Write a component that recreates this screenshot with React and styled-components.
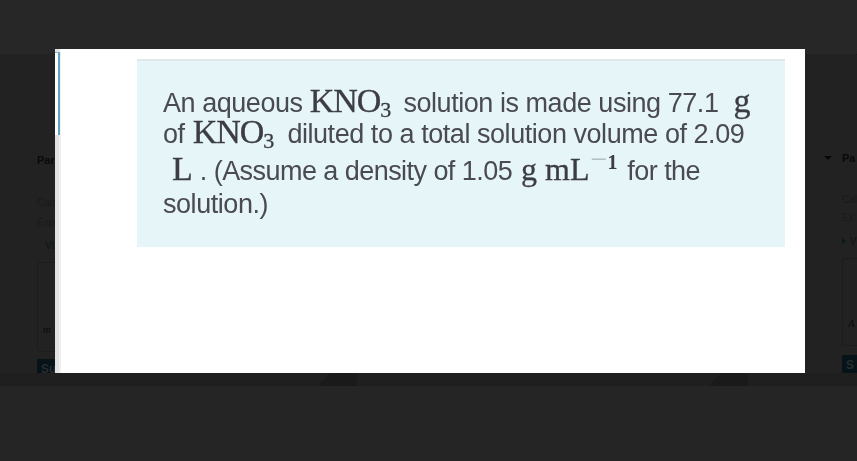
import styled, { createGlobalStyle } from 'styled-components';

const GlobalStyle = createGlobalStyle`
  html, body {
    margin: 0;
    height: 100%;
    overflow: hidden;
    background: #242424;
  }
  #root {
    height: 100%;
  }
`;

const Page = styled.div`
  position: relative;
  width: 857px;
  height: 461px;
  overflow: hidden;
  display: flex;
  flex-direction: column;
  background: #242424;
  font-family: 'Liberation Sans', Arial, sans-serif;
  filter: blur(0.4px);
`;

const TopBar = styled.div`
  height: 54px;
  flex: none;
  background: #272727;
  border-bottom: 1px dotted #1a1a1a;
`;

const Columns = styled.div`
  height: 318px;
  flex: none;
  display: grid;
  grid-template-columns: 805px 1fr;
  padding-left: 37px;
  background: #222222;
`;

const Column = styled.section`
  display: flex;
  flex-direction: column;
  align-items: flex-start;
  padding-top: ${({ $top }) => $top}px;
  font-size: 10px;
  white-space: nowrap;
`;

const PartTitle = styled.div`
  position: relative;
  font-weight: 700;
  font-size: 11px;
  line-height: 12px;
  color: #0a0a0a;
  margin-bottom: ${({ $gap }) => $gap}px;
`;

const Caret = styled.span`
  position: absolute;
  left: -18px;
  top: 4px;
  width: 0;
  height: 0;
  border-left: 4px solid transparent;
  border-right: 4px solid transparent;
  border-top: 4px solid #080808;
`;

const Hint = styled.div`
  line-height: 12px;
  margin-bottom: ${({ $gap }) => $gap}px;
  color: #1a1a1a;
`;

const Reveal = styled.div`
  display: flex;
  align-items: center;
  gap: 4px;
  height: 12px;
  padding-left: ${({ $indent }) => $indent}px;
  font-weight: 700;
  color: #10181c;
`;

const RevealArrow = styled.span`
  width: 0;
  height: 0;
  border-top: 4px solid transparent;
  border-bottom: 4px solid transparent;
  border-left: 4px solid #0c1a20;
`;

const AnswerBox = styled.div`
  width: 330px;
  height: ${({ $height }) => $height}px;
  margin-top: ${({ $top }) => $top}px;
  box-sizing: border-box;
  display: flex;
  align-items: flex-end;
  padding: 0 0 16px 5px;
  border: 1px solid #1c1c1c;
  border-radius: 3px;
  font-family: 'Liberation Serif', serif;
  font-style: italic;
  font-size: 11px;
  color: #0a0a0a;
`;

const SubmitButton = styled.div`
  width: 48px;
  height: 21px;
  margin-top: ${({ $top }) => $top}px;
  padding-left: 4px;
  box-sizing: border-box;
  background: #06141a;
  color: #2a2d2f;
  font-weight: 700;
  font-size: 12px;
  line-height: 21px;
`;

const BottomStrip = styled.div`
  flex: 1;
  background: #252525;
`;

const StripEdge = styled.div`
  height: 13px;
  background: #1f1f1f;
  display: flex;
  padding-left: 318px;
  gap: 352px;
`;

const Notch = styled.svg`
  width: 39px;
  height: 13px;
  display: block;
  flex: none;
`;

const Modal = styled.div`
  position: absolute;
  left: 55px;
  top: 49px;
  width: 750px;
  height: 324px;
  box-sizing: border-box;
  background: #fff;
  padding: 10px 20px 0 82px;
`;

const ModalEdge = styled.div`
  position: absolute;
  left: 0;
  top: 0;
  bottom: 0;
  width: 6px;
  background: linear-gradient(to right, #e2e2e2 4px, #efefef 4px);
`;

const EdgeAccent = styled.div`
  position: absolute;
  left: 0;
  top: 3px;
  width: 5px;
  height: 83px;
  background: #fff;
  border-top: 1px solid #8fbccb;
  border-right: 2px solid #5fa5bd;
  box-sizing: border-box;
`;

const Callout = styled.div`
  height: 188px;
  box-sizing: border-box;
  background: #e6f5f7;
  border-top: 2px solid #e0e9e9;
  padding: 26px 0 0 26px;
`;

const Question = styled.div`
  font-size: 27px;
  letter-spacing: -0.45px;
  color: #4a4a52;
  white-space: nowrap;
`;

const Line = styled.div`
  height: 32px;
  line-height: 32px;
  margin-top: ${({ $gap }) => $gap || 0}px;
  letter-spacing: ${({ $tight }) => ($tight ? '-0.55px' : 'inherit')};
`;

const Formula = styled.span`
  font-family: 'Liberation Serif', 'Times New Roman', serif;
  font-size: ${({ $size }) => $size || 34}px;
  line-height: 0;
  letter-spacing: ${({ $spacing }) => $spacing ?? -1}px;
  color: #3c3c44;
  -webkit-text-stroke: 0.3px #3c3c44;
  margin: 0 ${({ $right }) => $right ?? 0}px 0 ${({ $left }) => $left ?? 0}px;
`;

const Subscript = styled.span`
  display: inline-block;
  font-size: 22px;
  line-height: 0;
  letter-spacing: 0;
  transform: translateY(5px);
`;

const Superscript = styled.span`
  display: inline-block;
  font-family: 'Liberation Serif', serif;
  font-size: 20px;
  font-weight: 700;
  line-height: 0;
  letter-spacing: 0;
  color: #3c3c44;
  margin: 0 3px 0 1px;
  transform: translateY(-11px);
`;

const Dash = styled.span`
  font-size: 30px;
  font-weight: 400;
  color: #b4bfc2;
`;

export default function App() {
  return (
    <>
      <GlobalStyle />
      <Page>
        <TopBar />
        <Columns>
          <Column $top={99}>
            <PartTitle $gap={31}>Part</PartTitle>
            <Hint $gap={8}>Calc</Hint>
            <Hint $gap={10}>Expr</Hint>
            <Reveal $indent={8}>Vi</Reveal>
            <AnswerBox $top={11} $height={90}>m</AnswerBox>
            <SubmitButton $top={7}>Su</SubmitButton>
          </Column>
          <Column $top={97}>
            <PartTitle $gap={30}>
              <Caret />
              Pa
            </PartTitle>
            <Hint $gap={6}>Cal</Hint>
            <Hint $gap={11}>Ex</Hint>
            <Reveal $indent={0}>
              <RevealArrow />
              V
            </Reveal>
            <AnswerBox $top={11} $height={88}>A</AnswerBox>
            <SubmitButton $top={9}>S</SubmitButton>
          </Column>
        </Columns>
        <BottomStrip>
          <StripEdge>
            <Notch viewBox="0 0 39 13">
              <path d="M0 13 L12 0 H39 V13 Z" fill="#1a1a1a" />
            </Notch>
            <Notch viewBox="0 0 39 13">
              <path d="M0 13 L12 0 H39 V13 Z" fill="#1a1a1a" />
            </Notch>
          </StripEdge>
        </BottomStrip>
        <Modal>
          <ModalEdge />
          <EdgeAccent />
          <Callout>
            <Question>
              <Line>
                An aqueous <Formula $right={5}>KNO<Subscript>3</Subscript></Formula> solution is made using 77.1 <Formula $left={8} $spacing={0}>g</Formula>
              </Line>
              <Line $gap={-1}>
                of <Formula $left={1} $right={6}>KNO<Subscript>3</Subscript></Formula> diluted to a total solution volume of 2.09
              </Line>
              <Line $gap={5} $tight>
                <Formula $left={9} $right={7} $spacing={0}>L</Formula>. (Assume a density of 1.05 <Formula $left={2} $size={32} $spacing={0}>g</Formula> <Formula $left={1} $size={32} $spacing={0}>mL</Formula><Superscript><Dash>−</Dash>1</Superscript> for the
              </Line>
              <Line $gap={1}>solution.)</Line>
            </Question>
          </Callout>
        </Modal>
      </Page>
    </>
  );
}
